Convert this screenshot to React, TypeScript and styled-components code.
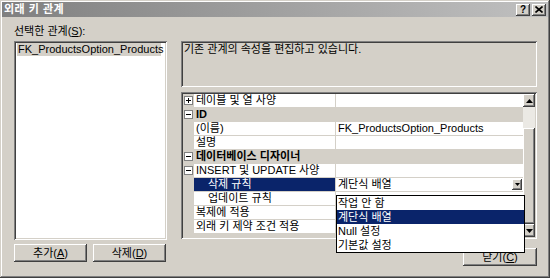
import styled, { createGlobalStyle } from "styled-components";

const GlobalStyle = createGlobalStyle`
  html, body {
    margin: 0;
    padding: 0;
    background: #d4d0c8;
  }
  body {
    font-family: "Liberation Sans", "Noto Sans CJK KR", sans-serif;
    font-size: 11px;
    color: #000;
  }
`;

const raised = `
  background: #d4d0c8;
  box-shadow: inset -1px -1px #404040, inset 1px 1px #fff, inset -2px -2px #808080, inset 2px 2px #d4d0c8;
`;

const sunken = `
  box-shadow: inset 1px 1px #808080, inset -1px -1px #fff, inset 2px 2px #404040, inset -2px -2px #d4d0c8;
`;

const Window = styled.div`
  width: 550px;
  height: 278px;
  box-sizing: border-box;
  padding: 2px;
  background: #d4d0c8;
  box-shadow: inset -1px -1px #404040, inset 1px 1px #d4d0c8, inset -2px -2px #808080, inset 2px 2px #fff;
  display: flex;
  flex-direction: column;
`;

const TitleBar = styled.div`
  height: 15px;
  display: flex;
  align-items: center;
  justify-content: space-between;
  padding: 0 2px 0 2px;
  background: linear-gradient(90deg, #808080 0%, #9a9a9a 40%, #c0c0c0 100%);
`;

const Title = styled.span`
  color: #fff;
  font-weight: bold;
  font-size: 11px;
  line-height: 15px;
  letter-spacing: 0.5px;
`;

const TitleButtons = styled.div`
  display: flex;
  gap: 2px;
`;

const TitleButton = styled.div`
  ${raised}
  width: 14px;
  height: 12px;
  display: flex;
  align-items: center;
  justify-content: center;
  font-weight: bold;
  font-size: 10px;
  line-height: 12px;
`;

const Body = styled.div`
  flex: 1;
  display: flex;
  gap: 14px;
  padding: 7px 11px 0 12px;
`;

const LeftColumn = styled.div`
  width: 153px;
  display: flex;
  flex-direction: column;
`;

const Label = styled.div`
  height: 14px;
  line-height: 14px;
  margin-bottom: 3px;
`;

const ListBox = styled.div`
  ${sunken}
  background: #fff;
  height: 199px;
  padding: 2px 3px;
  box-sizing: border-box;
`;

const ListItem = styled.div`
  background: #d4d0c8;
  height: 13px;
  line-height: 13px;
  padding-left: 1px;
  width: 143px;
`;

const ButtonRow = styled.div`
  display: flex;
  gap: 6px;
  margin-top: 4px;
`;

const Button = styled.div<{ $width?: number }>`
  ${raised}
  width: ${(p) => p.$width ?? 73}px;
  height: 18px;
  display: flex;
  align-items: center;
  justify-content: center;
  line-height: 14px;
`;

const RightColumn = styled.div`
  width: 356px;
  padding-top: 17px;
  display: flex;
  flex-direction: column;
`;

const Description = styled.div`
  ${sunken}
  height: 46px;
  box-sizing: border-box;
  padding: 2px 3px;
  line-height: 13px;
`;

const GridWrap = styled.div`
  position: relative;
  margin-top: 5px;
`;

const Grid = styled.div`
  ${sunken}
  height: 147px;
  box-sizing: border-box;
  padding: 2px;
  display: flex;
  overflow: hidden;
`;

const Rows = styled.div`
  flex: 1;
  display: flex;
  flex-direction: column;
`;

const Row = styled.div<{ $category?: boolean }>`
  height: 14px;
  display: flex;
  box-sizing: border-box;
  background: ${(p) => (p.$category ? "#d4d0c8" : "#fff")};
  border-bottom: 1px solid #d4d0c8;
`;

const Gutter = styled.div`
  width: 11px;
  background: #d4d0c8;
  display: flex;
  align-items: center;
  justify-content: center;
`;

const NameCell = styled.div<{ $indent?: number; $selected?: boolean; $bold?: boolean }>`
  width: 141px;
  box-sizing: border-box;
  padding-left: ${(p) => 2 + (p.$indent ?? 0)}px;
  line-height: 13px;
  white-space: nowrap;
  overflow: hidden;
  font-weight: ${(p) => (p.$bold ? "bold" : "normal")};
  background: ${(p) => (p.$selected ? "#0a246a" : "transparent")};
  color: ${(p) => (p.$selected ? "#fff" : "#000")};
`;

const ValueCell = styled.div<{ $category?: boolean }>`
  flex: 1;
  border-left: 1px solid #d4d0c8;
  padding-left: 2px;
  line-height: 13px;
  white-space: nowrap;
  display: flex;
  justify-content: space-between;
  background: ${(p) => (p.$category ? "#d4d0c8" : "#fff")};
`;

const ComboButton = styled.div`
  ${raised}
  width: 10px;
  height: 11px;
  margin: 1px 1px 0 0;
  display: flex;
  align-items: center;
  justify-content: center;
`;

const Scrollbar = styled.div`
  width: 12px;
  display: flex;
  flex-direction: column;
  background: #ebe9e4;
`;

const ScrollArrow = styled.div`
  ${raised}
  height: 13px;
  display: flex;
  align-items: center;
  justify-content: center;
`;

const ScrollThumb = styled.div`
  ${raised}
  flex: 1;
  margin-top: 21px;
`;

const Dropdown = styled.div`
  position: absolute;
  left: 155px;
  top: 103px;
  width: 187px;
  border: 1px solid #000;
  background: #fff;
  z-index: 2;
`;

const DropItem = styled.div<{ $active?: boolean }>`
  height: 14px;
  line-height: 14px;
  padding-left: 1px;
  background: ${(p) => (p.$active ? "#0a246a" : "#fff")};
  color: ${(p) => (p.$active ? "#fff" : "#000")};
`;

const CloseRow = styled.div`
  display: flex;
  justify-content: flex-end;
  margin-top: 9px;
`;

function ExpandBox({ open }: { open: boolean }) {
  return (
    <svg width="9" height="9" viewBox="0 0 9 9">
      <rect x="0.5" y="0.5" width="8" height="8" fill="#fff" stroke="#808080" />
      <line x1="2" y1="4.5" x2="7" y2="4.5" stroke="#000" />
      {!open && <line x1="4.5" y1="2" x2="4.5" y2="7" stroke="#000" />}
    </svg>
  );
}

function Arrow({ dir }: { dir: "up" | "down" }) {
  return (
    <svg width="7" height="4" viewBox="0 0 7 4">
      {dir === "up" ? <path d="M3.5 0 L7 4 L0 4 Z" fill="#000" /> : <path d="M0 0 L7 0 L3.5 4 Z" fill="#000" />}
    </svg>
  );
}

type Prop = {
  name: string;
  value?: string;
  expand?: "open" | "closed";
  category?: boolean;
  indent?: number;
  selected?: boolean;
  combo?: boolean;
};

const properties: Prop[] = [
  { name: "테이블 및 열 사양", expand: "closed" },
  { name: "ID", expand: "open", category: true },
  { name: "(이름)", value: "FK_ProductsOption_Products" },
  { name: "설명" },
  { name: "데이터베이스 디자이너", expand: "open", category: true },
  { name: "INSERT 및 UPDATE 사양", expand: "open" },
  { name: "삭제 규칙", value: "계단식 배열", indent: 12, selected: true, combo: true },
  { name: "업데이트 규칙", indent: 12 },
  { name: "복제에 적용" },
  { name: "외래 키 제약 조건 적용" },
];

const options = ["작업 안 함", "계단식 배열", "Null 설정", "기본값 설정"];

export default function App() {
  return (
    <>
      <GlobalStyle />
      <Window>
        <TitleBar>
          <Title>외래 키 관계</Title>
          <TitleButtons>
            <TitleButton>?</TitleButton>
            <TitleButton>
              <svg width="8" height="7" viewBox="0 0 8 7">
                <path d="M0.5 0.5 L7.5 6.5 M7.5 0.5 L0.5 6.5" stroke="#000" strokeWidth="1.6" />
              </svg>
            </TitleButton>
          </TitleButtons>
        </TitleBar>
        <Body>
          <LeftColumn>
            <Label>
              선택한 관계(<u>S</u>):
            </Label>
            <ListBox>
              <ListItem>FK_ProductsOption_Products</ListItem>
            </ListBox>
            <ButtonRow>
              <Button>
                추가(<u>A</u>)
              </Button>
              <Button>
                삭제(<u>D</u>)
              </Button>
            </ButtonRow>
          </LeftColumn>
          <RightColumn>
            <Description>기존 관계의 속성을 편집하고 있습니다.</Description>
            <GridWrap>
              <Grid>
                <Rows>
                  {properties.map((p) => (
                    <Row key={p.name} $category={p.category}>
                      <Gutter>{p.expand && <ExpandBox open={p.expand === "open"} />}</Gutter>
                      <NameCell $indent={p.indent} $selected={p.selected} $bold={p.category}>
                        {p.name}
                      </NameCell>
                      <ValueCell $category={p.category}>
                        <span>{p.value}</span>
                        {p.combo && (
                          <ComboButton>
                            <svg width="5" height="3" viewBox="0 0 5 3">
                              <path d="M0 0 L5 0 L2.5 3 Z" fill="#000" />
                            </svg>
                          </ComboButton>
                        )}
                      </ValueCell>
                    </Row>
                  ))}
                </Rows>
                <Scrollbar>
                  <ScrollArrow>
                    <Arrow dir="up" />
                  </ScrollArrow>
                  <ScrollThumb />
                  <ScrollArrow>
                    <Arrow dir="down" />
                  </ScrollArrow>
                </Scrollbar>
              </Grid>
              <Dropdown>
                {options.map((o) => (
                  <DropItem key={o} $active={o === "계단식 배열"}>
                    {o}
                  </DropItem>
                ))}
              </Dropdown>
            </GridWrap>
            <CloseRow>
              <Button $width={74}>
                닫기(<u>C</u>)
              </Button>
            </CloseRow>
          </RightColumn>
        </Body>
      </Window>
    </>
  );
}
